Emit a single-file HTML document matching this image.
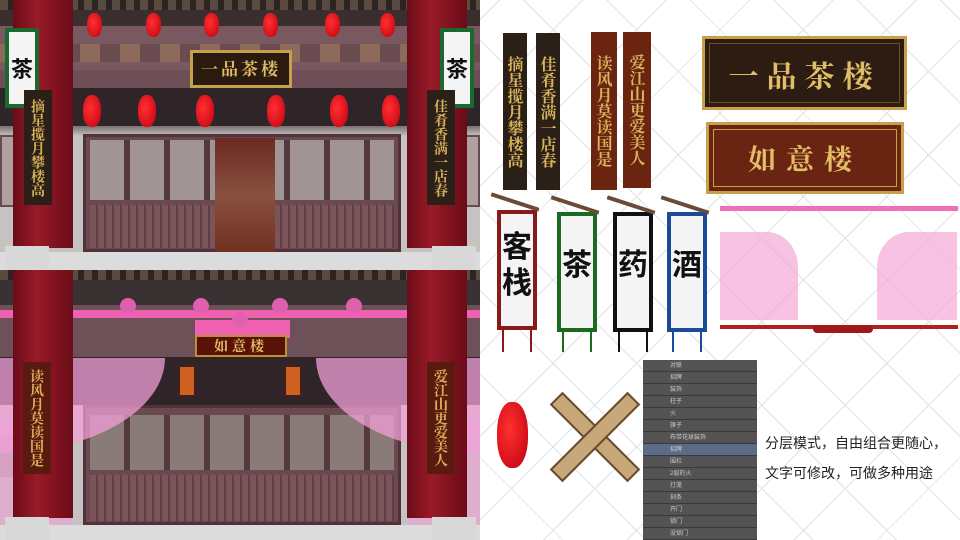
<!DOCTYPE html>
<html><head><meta charset="utf-8"><style>
*{margin:0;padding:0;box-sizing:border-box}
body{width:960px;height:540px;overflow:hidden;position:relative;background:#fff;font-family:"Liberation Sans","Noto Sans CJK SC",sans-serif}
.a{position:absolute}
.grid{left:480px;top:0;width:480px;height:540px;background:
repeating-linear-gradient(45deg,transparent 0 58px,#e2e2e2 58px 59px),
repeating-linear-gradient(-45deg,transparent 0 58px,#e2e2e2 58px 59px),#fff}
.vt{writing-mode:vertical-rl;font-family:"Noto Serif CJK SC",serif;color:#d9b35a;text-align:center;font-weight:bold}
.cal{font-family:"Noto Serif CJK SC",serif;color:#e0bd66;font-weight:bold;text-align:center}
.lan{position:absolute;width:15px;height:24px;background:radial-gradient(ellipse at 40% 40%,#ff3030,#c00010);border-radius:45%}
.flag{position:absolute;background:#f4f4f4;border:4px solid;font-family:"Noto Sans CJK SC",sans-serif;font-size:30px;font-weight:bold;color:#111;text-align:center;line-height:36px}
.door{position:absolute;background:repeating-linear-gradient(90deg,#7a5458 0 6px,#5e3e44 6px 8px)}
</style></head><body>
<div class="a grid"></div>

<!-- TOP SCENE -->
<div class="a" style="left:0;top:0;width:480px;height:270px;background:#c6c2c2;overflow:hidden">
 <div class="a" style="left:0;top:0;width:480px;height:10px;background:repeating-linear-gradient(90deg,#5a4a40 0 8px,#2c2420 8px 14px)"></div>
 <div class="a" style="left:0;top:10px;width:480px;height:16px;background:#3a2e2e"></div>
 <div class="a" style="left:0;top:26px;width:480px;height:44px;background:#7a5860"></div>
 <div class="a" style="left:0;top:44px;width:480px;height:18px;background:repeating-linear-gradient(90deg,#8d6a5a 0 20px,#6a4c50 20px 40px)"></div>
 <div class="a" style="left:0;top:70px;width:480px;height:18px;background:#6e4f58"></div>
 <div class="a" style="left:0;top:88px;width:480px;height:38px;background:#2f2428"></div>
 <div class="a" style="left:0;top:126px;width:480px;height:10px;background:linear-gradient(#7a7070,#c6c2c2)"></div>
 <div class="a" style="left:83px;top:134px;width:318px;height:118px;background:#6a4a50;border:3px solid #503238"></div>
 <div class="a" style="left:90px;top:140px;width:304px;height:60px;background:repeating-linear-gradient(90deg,#a09494 0 34px,#55383e 34px 40px)"></div>
 <div class="door" style="left:90px;top:205px;width:304px;height:43px"></div>
 <div class="a" style="left:215px;top:138px;width:60px;height:115px;background:linear-gradient(#6a2a22,#8a5040 50%,#703020)"></div>
 <div class="a" style="left:0;top:135px;width:70px;height:72px;background:#b0a0a0;border:2px solid #6a4a50"></div>
 <div class="a" style="left:408px;top:135px;width:72px;height:72px;background:#b0a0a0;border:2px solid #6a4a50"></div>
 <div class="a" style="left:0;top:252px;width:480px;height:18px;background:#dcdcdc"></div>
 <div class="a" style="left:190px;top:50px;width:102px;height:38px;background:#2a1a10;border:3px solid #c9a04a"></div>
 <div class="a cal" style="left:190px;top:55px;width:102px;font-size:17px;letter-spacing:3px">一品茶楼</div>
 <div class="lan" style="left:87px;top:13px"></div><div class="lan" style="left:146px;top:13px"></div><div class="lan" style="left:204px;top:13px"></div><div class="lan" style="left:263px;top:13px"></div><div class="lan" style="left:325px;top:13px"></div><div class="lan" style="left:380px;top:13px"></div>
 <div class="lan" style="left:83px;top:95px;width:18px;height:32px"></div><div class="lan" style="left:138px;top:95px;width:18px;height:32px"></div><div class="lan" style="left:196px;top:95px;width:18px;height:32px"></div><div class="lan" style="left:267px;top:95px;width:18px;height:32px"></div><div class="lan" style="left:330px;top:95px;width:18px;height:32px"></div><div class="lan" style="left:382px;top:95px;width:18px;height:32px"></div>
 <div class="a" style="left:13px;top:0;width:60px;height:248px;background:linear-gradient(90deg,#6a0c18,#9a1a28 40%,#6a0c18)"></div>
 <div class="a" style="left:407px;top:0;width:60px;height:248px;background:linear-gradient(90deg,#6a0c18,#9a1a28 40%,#6a0c18)"></div>
 <div class="a" style="left:5px;top:246px;width:44px;height:24px;background:#d8d8d8"></div>
 <div class="a" style="left:432px;top:246px;width:44px;height:24px;background:#d8d8d8"></div>
 <div class="flag" style="left:5px;top:28px;width:34px;height:80px;border-color:#1a6a30;font-size:22px;line-height:72px">茶</div>
 <div class="flag" style="left:440px;top:28px;width:34px;height:80px;border-color:#1a6a30;font-size:22px;line-height:72px">茶</div>
 <div class="a vt" style="left:24px;top:90px;width:28px;height:115px;background:#2a2018;font-size:14px;line-height:28px">摘星揽月攀楼高</div>
 <div class="a vt" style="left:427px;top:90px;width:28px;height:115px;background:#2a2018;font-size:14px;line-height:28px">佳肴香满一店春</div>
</div>

<!-- BOTTOM SCENE -->
<div class="a" style="left:0;top:270px;width:480px;height:270px;background:#c6c2c2;overflow:hidden">
 <div class="a" style="left:0;top:0;width:480px;height:10px;background:repeating-linear-gradient(90deg,#5a4a40 0 8px,#2c2420 8px 14px)"></div>
 <div class="a" style="left:0;top:10px;width:480px;height:25px;background:#3a3232"></div>
 <div class="a" style="left:0;top:35px;width:480px;height:52px;background:#6e5058"></div>
 <div class="a" style="left:0;top:87px;width:480px;height:48px;background:#2f2428"></div>
 <div class="a" style="left:83px;top:135px;width:318px;height:120px;background:#6a4a50;border:3px solid #503238"></div>
 <div class="a" style="left:90px;top:145px;width:304px;height:55px;background:repeating-linear-gradient(90deg,#8a7a78 0 34px,#55383e 34px 40px)"></div>
 <div class="door" style="left:90px;top:205px;width:304px;height:46px"></div>
 <div class="a" style="left:0;top:165px;width:70px;height:42px;background:#b0a0a0"></div>
 <div class="a" style="left:0;top:255px;width:480px;height:15px;background:#dcdcdc"></div>
 <div class="a" style="left:0;top:88px;width:165px;height:95px;background:rgba(240,160,215,.75);border-radius:0 0 100% 0"></div>
 <div class="a" style="left:0;top:150px;width:72px;height:105px;background:rgba(240,160,215,.6)"></div>
 <div class="a" style="left:316px;top:88px;width:164px;height:95px;background:rgba(240,160,215,.75);border-radius:0 0 0 100%"></div>
 <div class="a" style="left:408px;top:150px;width:72px;height:105px;background:rgba(240,160,215,.6)"></div>
 <div class="a" style="left:0;top:40px;width:480px;height:8px;background:#f060b0"></div>
 <div class="a" style="left:195px;top:50px;width:95px;height:18px;background:#f060b0"></div>
 <div class="a" style="left:195px;top:65px;width:92px;height:22px;background:#5a1208;border:2px solid #b8903a"></div>
 <div class="a cal" style="left:195px;top:66px;width:92px;font-size:14px;letter-spacing:4px">如意楼</div>
 <div class="a" style="left:120px;top:28px;width:16px;height:16px;border-radius:50%;background:#e060b0"></div>
 <div class="a" style="left:193px;top:28px;width:16px;height:16px;border-radius:50%;background:#e060b0"></div>
 <div class="a" style="left:232px;top:42px;width:16px;height:16px;border-radius:50%;background:#e060b0"></div>
 <div class="a" style="left:272px;top:28px;width:16px;height:16px;border-radius:50%;background:#e060b0"></div>
 <div class="a" style="left:346px;top:28px;width:16px;height:16px;border-radius:50%;background:#e060b0"></div>
 <div class="a" style="left:178px;top:95px;width:18px;height:32px;background:#d06020;border:2px solid #402020"></div>
 <div class="a" style="left:284px;top:95px;width:18px;height:32px;background:#d06020;border:2px solid #402020"></div>
 <div class="a" style="left:13px;top:0;width:60px;height:248px;background:linear-gradient(90deg,#6a0c18,#9a1a28 40%,#6a0c18)"></div>
 <div class="a" style="left:407px;top:0;width:60px;height:248px;background:linear-gradient(90deg,#6a0c18,#9a1a28 40%,#6a0c18)"></div>
 <div class="a" style="left:5px;top:247px;width:44px;height:23px;background:#d8d8d8"></div>
 <div class="a" style="left:432px;top:247px;width:44px;height:23px;background:#d8d8d8"></div>
 <div class="a vt" style="left:23px;top:92px;width:28px;height:112px;background:#5a1a10;font-size:14px;line-height:28px">读风月莫读国是</div>
 <div class="a vt" style="left:427px;top:92px;width:28px;height:112px;background:#5a1a10;font-size:14px;line-height:28px">爱江山更爱美人</div>
</div>

<!-- RIGHT ASSETS -->
<div class="a vt" style="left:503px;top:33px;width:24px;height:157px;background:#2a2018;font-size:16px;line-height:24px">摘星揽月攀楼高</div>
<div class="a vt" style="left:536px;top:33px;width:24px;height:157px;background:#2a2018;font-size:16px;line-height:24px">佳肴香满一店春</div>
<div class="a vt" style="left:591px;top:32px;width:26px;height:158px;background:#6a2410;font-size:16px;line-height:26px">读风月莫读国是</div>
<div class="a vt" style="left:623px;top:32px;width:28px;height:156px;background:#6a2410;font-size:16px;line-height:28px">爱江山更爱美人</div>
<div class="a" style="left:702px;top:36px;width:205px;height:74px;background:#2c1c12;border:3px solid #c9a04a;outline:1px solid #6a5020;outline-offset:-8px"></div>
<div class="a cal" style="left:702px;top:52px;width:205px;font-size:30px;letter-spacing:8px">一品茶楼</div>
<div class="a" style="left:706px;top:122px;width:198px;height:72px;background:#6a2412;border:3px solid #c9a04a;outline:1px solid #c9a04a;outline-offset:-8px"></div>
<div class="a cal" style="left:706px;top:138px;width:198px;font-size:28px;letter-spacing:10px">如意楼</div>

<div class="flag" style="left:497px;top:210px;width:40px;height:120px;border-color:#8a1a1a;padding-top:12px">客<br>栈</div>
<div class="flag" style="left:557px;top:212px;width:40px;height:120px;border-color:#1a6a20;padding-top:28px">茶</div>
<div class="flag" style="left:613px;top:212px;width:40px;height:120px;border-color:#111;padding-top:28px">药</div>
<div class="flag" style="left:667px;top:212px;width:40px;height:120px;border-color:#1a4a9a;padding-top:28px">酒</div>
<div class="a" style="left:490px;top:200px;width:50px;height:4px;background:#6a4a3a;transform:rotate(18deg)"></div>
<div class="a" style="left:550px;top:203px;width:50px;height:4px;background:#6a4a3a;transform:rotate(18deg)"></div>
<div class="a" style="left:606px;top:203px;width:50px;height:4px;background:#6a4a3a;transform:rotate(18deg)"></div>
<div class="a" style="left:660px;top:203px;width:50px;height:4px;background:#6a4a3a;transform:rotate(18deg)"></div>
<div class="a" style="left:502px;top:330px;width:30px;height:22px;border-left:2px solid #8a1a1a;border-right:2px solid #8a1a1a"></div>
<div class="a" style="left:562px;top:332px;width:30px;height:20px;border-left:2px solid #1a6a20;border-right:2px solid #1a6a20"></div>
<div class="a" style="left:618px;top:332px;width:30px;height:20px;border-left:2px solid #111;border-right:2px solid #111"></div>
<div class="a" style="left:672px;top:332px;width:30px;height:20px;border-left:2px solid #1a4a9a;border-right:2px solid #1a4a9a"></div>

<div class="a" style="left:720px;top:206px;width:238px;height:5px;background:#f070b8"></div>
<div class="a" style="left:720px;top:232px;width:78px;height:88px;background:rgba(245,170,215,.7);border-radius:0 40% 0 0"></div>
<div class="a" style="left:877px;top:232px;width:80px;height:88px;background:rgba(245,170,215,.7);border-radius:40% 0 0 0"></div>
<div class="a" style="left:720px;top:325px;width:238px;height:4px;background:#b02020"></div>
<div class="a" style="left:813px;top:325px;width:60px;height:8px;background:#a01818;border-radius:4px"></div>

<div class="lan" style="left:497px;top:402px;width:31px;height:66px"></div>
<div class="a" style="left:540px;top:428px;width:110px;height:18px;background:#c8a878;border:2px solid #6a4a30;transform:rotate(45deg)"></div>
<div class="a" style="left:540px;top:428px;width:110px;height:18px;background:#c8a878;border:2px solid #6a4a30;transform:rotate(-45deg)"></div>

<div class="a" style="left:643px;top:360px;width:114px;height:180px;background:#535353"></div>
<div class="a" style="left:643px;top:443px;width:114px;height:12px;background:#5a6c88"></div>
<div class="a" style="left:643px;top:360px;width:114px;height:180px;background:repeating-linear-gradient(#0000 0 11px,#3a3a3a 11px 12px)"></div>
<div class="a" style="left:670px;top:360px;font-size:6px;color:#ccc;line-height:12px">对联<br>招牌<br>装饰<br>柱子<br>火<br>旗子<br>布带花球装饰<br>招牌<br>围栏<br>2层的火<br>灯笼<br>刻条<br>开门<br>锁门<br>没锁门</div>

<div class="a" style="left:765px;top:428px;font-size:14px;color:#222;line-height:30px">分层模式，自由组合更随心，<br>文字可修改，可做多种用途</div>
</body></html>
